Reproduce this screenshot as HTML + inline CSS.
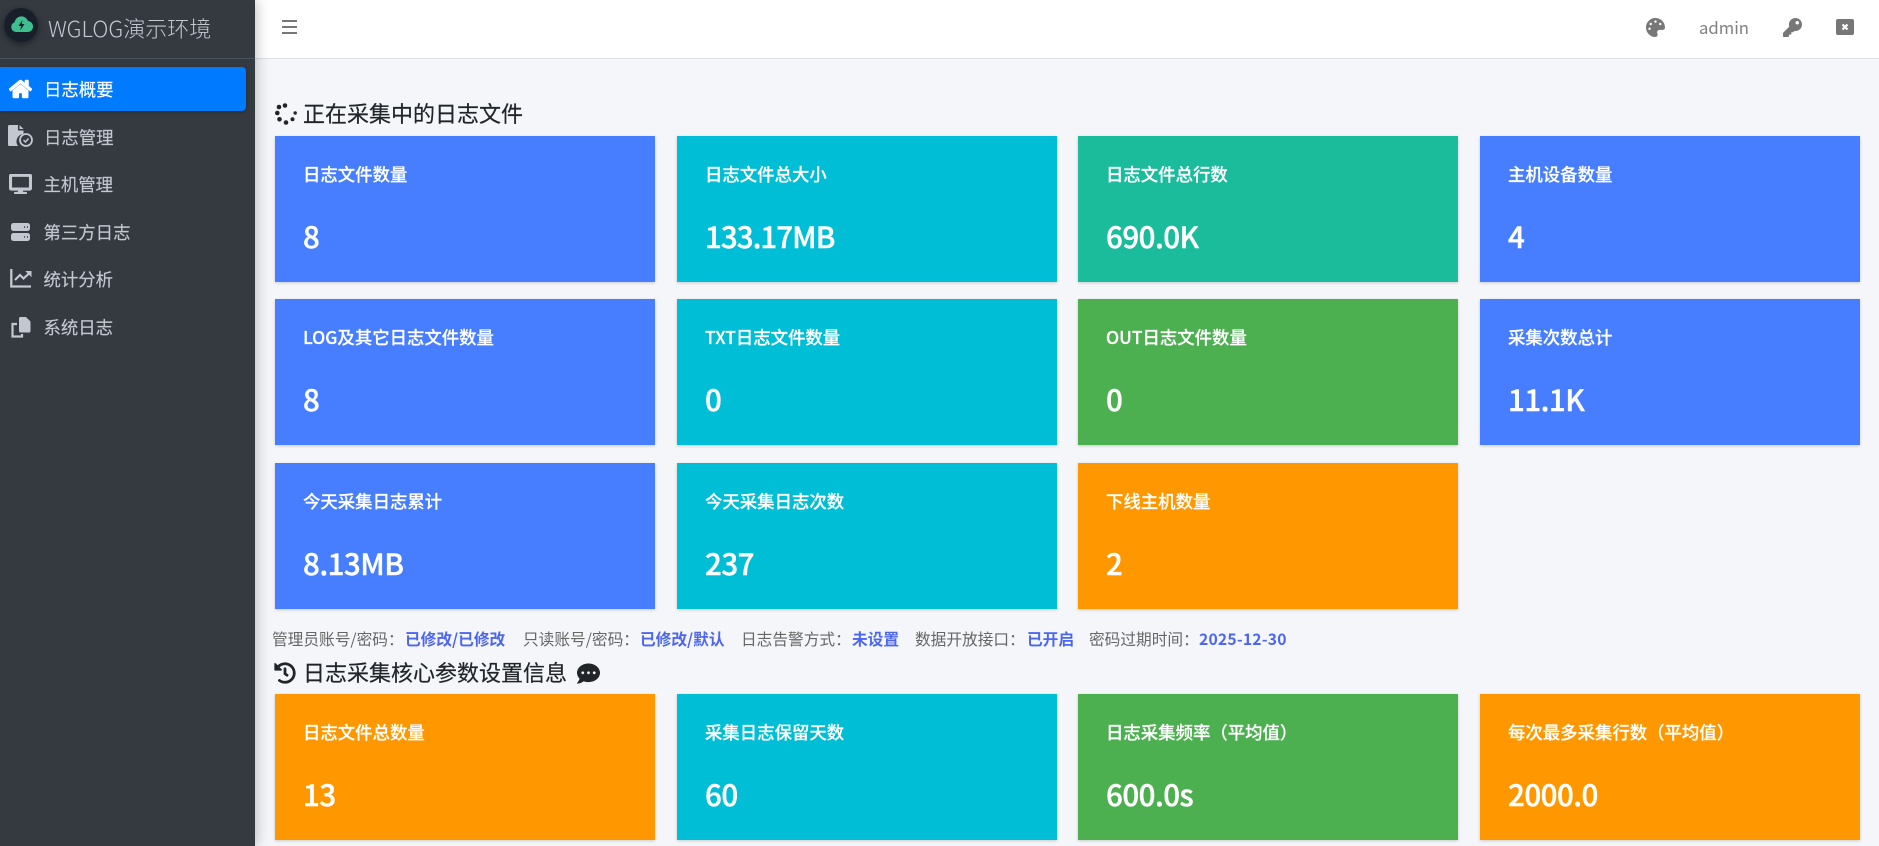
<!DOCTYPE html>
<html lang="zh"><head><meta charset="utf-8"><title>WGLOG</title>
<style>
*{box-sizing:border-box}
html,body{margin:0;padding:0;width:1879px;height:846px;overflow:hidden;background:#f4f6f9;font-family:"Noto Sans CJK SC","Liberation Sans",sans-serif;color:#212529}
.abs,.card,.n,.t{position:absolute}
.side{position:absolute;left:0;top:0;width:255px;height:846px;background:#343a40;box-shadow:0 0 14px rgba(0,0,0,.3);z-index:3}
.top{position:absolute;left:255px;top:0;width:1624px;height:59px;background:#fff;border-bottom:1px solid #dee2e6}
.brand{position:absolute;left:48px;top:12px;font-size:22px;line-height:32px;color:#c2c7d0;font-weight:300;white-space:nowrap}
.sep{position:absolute;left:0;top:58px;width:255px;height:1px;background:#4b545c}
.pill{position:absolute;left:0;top:67px;width:246px;height:44px;background:#007bff;border-radius:0 4px 4px 0;box-shadow:0 1px 3px rgba(0,0,0,.3)}
.n{font-size:17.4px;line-height:24px;color:#c2c7d0;white-space:nowrap;left:43.5px;-webkit-text-stroke:.15px currentColor}
.card{width:380px;height:146px;box-shadow:0 1px 3px rgba(0,0,0,.18);color:#fff}
.card .a{position:absolute;left:28px;top:26px;font-size:17.4px;line-height:26px;font-weight:500;white-space:nowrap;-webkit-text-stroke:.2px #fff}
.card .b{position:absolute;left:28px;top:78px;font-size:29.5px;line-height:44px;font-weight:500;white-space:nowrap;letter-spacing:-.5px;-webkit-text-stroke:.4px #fff}
.bl{background:#467eff}.cy{background:#00bed6}.te{background:#1abc9c}.gr{background:#4caf50}.or{background:#ff9800}
.h{position:absolute;font-size:22px;line-height:30px;color:#212529;white-space:nowrap;font-weight:400;-webkit-text-stroke:.2px #212529}
.t{font-size:15.7px;line-height:22px;top:628px;color:#666;white-space:nowrap}
.t.s{color:#4c66f0;font-weight:700}
svg{position:absolute;display:block}
</style></head><body>
<div class="top">
<div class="abs" style="left:27px;top:20px;width:15px;height:2px;background:#777;box-shadow:0 6px 0 #777,0 12px 0 #777"></div>
</div>
<svg style="left:1646px;top:18px" width="19" height="19" viewBox="0 0 512 512" fill="#777"><path d="M204.3 5C104.9 24.4 24.8 104.3 5.2 203.4c-37 187 131.7 326.4 258.8 306.7 41.2-6.4 61.4-54.6 42.5-91.7-23.1-45.4 9.9-98.4 60.9-98.4h79.7c35.8 0 64.8-29.6 64.9-65.3C511.5 97.1 368.1-26.9 204.3 5zM96 320c-17.7 0-32-14.3-32-32s14.3-32 32-32 32 14.3 32 32-14.3 32-32 32zm32-128c-17.7 0-32-14.3-32-32s14.3-32 32-32 32 14.3 32 32-14.3 32-32 32zm128-64c-17.7 0-32-14.3-32-32s14.3-32 32-32 32 14.3 32 32-14.3 32-32 32zm128 64c-17.7 0-32-14.3-32-32s14.3-32 32-32 32 14.3 32 32-14.3 32-32 32z"/></svg>
<div class="abs" style="left:1699px;top:15px;font-size:16.7px;line-height:24px;color:#808080;font-weight:400">admin</div>
<svg style="left:1783px;top:18px" width="19" height="19" viewBox="0 0 512 512" fill="#777"><path d="M512 176.001C512 273.203 433.202 352 336 352c-11.22 0-22.19-1.062-32.827-3.069l-24.012 27.014A23.999 23.999 0 0 1 261.223 384H224v40c0 13.255-10.745 24-24 24h-40v40c0 13.255-10.745 24-24 24H24c-13.255 0-24-10.745-24-24v-78.059c0-6.365 2.529-12.47 7.029-16.971l161.802-161.802C163.108 213.814 160 195.271 160 176 160 78.798 238.797.001 335.999 0 433.488-.001 512 78.511 512 176.001zM336 128c0 26.51 21.49 48 48 48s48-21.49 48-48-21.49-48-48-48-48 21.49-48 48z"/></svg>
<svg style="left:1836px;top:19px" width="18" height="16" viewBox="0 0 18 16"><rect width="18" height="16" rx="2" fill="#777"/><path d="M6.500 5.500l5 5M11.500 5.500l-5 5" stroke="#fff" stroke-width="2.200"/></svg>

<div class="side">
<div class="abs" style="left:4px;top:8px;width:34px;height:34px;border-radius:50%;box-shadow:0 2px 7px rgba(0,0,0,.45)"></div>
<svg style="left:4px;top:8px" width="34" height="34" viewBox="0 0 34 34"><circle cx="17" cy="17" r="17" fill="#181f2a"/><path d="M12 24a5 5 0 0 1-1.500-9.700A7 7 0 0 1 24 13a5.500 5.500 0 0 1-1 11z" fill="#3dbf90"/><path d="M18.500 12l-4 6h2.600l-.8 4.500 4.200-6.500h-2.700z" fill="#181f2a"/></svg>
<div class="brand">WGLOG演示环境</div>
<div class="sep"></div>
<div class="pill"></div>
<svg style="left:9px;top:79px" width="23" height="20" viewBox="0 0 576 512" fill="#fff" stroke="#fff" stroke-width="24"><path d="M280.37 148.26L96 300.11V464a16 16 0 0 0 16 16l112.06-.29a16 16 0 0 0 15.92-16V368a16 16 0 0 1 16-16h64a16 16 0 0 1 16 16v95.64a16 16 0 0 0 16 16.05L464 480a16 16 0 0 0 16-16V300L295.67 148.26a12.19 12.19 0 0 0-15.3 0zM571.6 251.47L488 182.56V44.05a12 12 0 0 0-12-12h-56a12 12 0 0 0-12 12v72.61L318.47 43a48 48 0 0 0-61 0L4.34 251.47a12 12 0 0 0-1.6 16.9l25.5 31A12 12 0 0 0 45.15 301l235.22-193.74a12.19 12.19 0 0 1 15.3 0L530.9 301a12 12 0 0 0 16.9-1.6l25.5-31a12 12 0 0 0-1.7-16.93z"/></svg>
<div class="n" style="top:78px;color:#fff;left:44px">日志概要</div>
<svg style="left:8px;top:125px" width="25" height="22" viewBox="0 0 25 22"><path d="M1.500 0H10v5.500h5.500V9A7.500 7.500 0 0 0 10 21H1.500A1.500 1.500 0 0 1 0 19.500V1.500A1.500 1.500 0 0 1 1.500 0zM11.500 0l4 4h-4z" fill="#c2c7d0"/><circle cx="18" cy="15" r="6" fill="none" stroke="#c2c7d0" stroke-width="1.800"/><path d="M15.500 15l2 2 3-3.500" fill="none" stroke="#c2c7d0" stroke-width="1.500"/></svg>
<div class="n" style="top:126px;left:44px">日志管理</div>
<svg style="left:9px;top:174px" width="23" height="20" viewBox="0 0 576 512" fill="#c2c7d0" stroke="#c2c7d0" stroke-width="16"><path d="M528 0H48C21.500 0 0 21.500 0 48v320c0 26.500 21.500 48 48 48h192l-16 48h-72c-13.300 0-24 10.700-24 24s10.700 24 24 24h272c13.300 0 24-10.700 24-24s-10.700-24-24-24h-72l-16-48h192c26.500 0 48-21.500 48-48V48c0-26.500-21.500-48-48-48zm-16 352H64V64h448v288z"/></svg>
<div class="n" style="top:173px">主机管理</div>
<svg style="left:11px;top:223px" width="19" height="18" viewBox="0 0 19 18"><rect width="19" height="8" rx="2.500" fill="#c2c7d0"/><rect y="10" width="19" height="8" rx="2.500" fill="#c2c7d0"/><path d="M13 4h1M16 4h1M13 14h1M16 14h1" stroke="#343a40" stroke-width="1.500"/></svg>
<div class="n" style="top:221px">第三方日志</div>
<svg style="left:10px;top:268px" width="22" height="20" viewBox="0 0 22 20" fill="none" stroke="#c2c7d0"><path d="M1.300 1v17.500H21" stroke-width="2.300"/><path d="M5 12l5-5 3.500 3.500L19.500 5" stroke-width="2.200"/><path d="M16.500 3.500h4.500V8z" fill="#c2c7d0" stroke-width="1"/></svg>
<div class="n" style="top:268px">统计分析</div>
<svg style="left:11px;top:317px" width="20" height="21" viewBox="0 0 20 21"><path d="M8 1.500A1.500 1.500 0 0 1 9.500 0H15l4.500 4.500V14a1.500 1.500 0 0 1-1.500 1.500H9.500A1.500 1.500 0 0 1 8 14z" fill="#c2c7d0"/><path d="M6 7H1.500v12.500H11V17" fill="none" stroke="#c2c7d0" stroke-width="2.200"/></svg>
<div class="n" style="top:316px">系统日志</div>
</div>

<svg style="left:275px;top:103px" width="22" height="22" viewBox="0 0 22 22" fill="#212529"><circle cx="10" cy="2.500" r="2.300"/><circle cx="20.200" cy="10" r="1.700"/><circle cx="17.500" cy="16.300" r="2"/><circle cx="11" cy="19.500" r="2.300"/><circle cx="4.500" cy="16.300" r="2.300"/><circle cx="2.300" cy="10" r="2.300"/><circle cx="4" cy="4" r="2.300"/></svg>
<div class="h" style="left:303px;top:98px">正在采集中的日志文件</div>

<div class="card bl" style="left:275px;top:136px"><div class="a">日志文件数量</div><div class="b">8</div></div>
<div class="card cy" style="left:677px;top:136px"><div class="a">日志文件总大小</div><div class="b" style="letter-spacing:-.95px">133.17MB</div></div>
<div class="card te" style="left:1078px;top:136px"><div class="a">日志文件总行数</div><div class="b">690.0K</div></div>
<div class="card bl" style="left:1480px;top:136px"><div class="a">主机设备数量</div><div class="b">4</div></div>

<div class="card bl" style="left:275px;top:299px"><div class="a">LOG及其它日志文件数量</div><div class="b">8</div></div>
<div class="card cy" style="left:677px;top:299px"><div class="a">TXT日志文件数量</div><div class="b">0</div></div>
<div class="card gr" style="left:1078px;top:299px"><div class="a">OUT日志文件数量</div><div class="b">0</div></div>
<div class="card bl" style="left:1480px;top:299px"><div class="a">采集次数总计</div><div class="b">11.1K</div></div>

<div class="card bl" style="left:275px;top:463px"><div class="a">今天采集日志累计</div><div class="b">8.13MB</div></div>
<div class="card cy" style="left:677px;top:463px"><div class="a">今天采集日志次数</div><div class="b">237</div></div>
<div class="card or" style="left:1078px;top:463px"><div class="a">下线主机数量</div><div class="b">2</div></div>

<div class="t" style="left:272px">管理员账号/密码：</div><div class="t s" style="left:405px">已修改/已修改</div>
<div class="t" style="left:523px">只读账号/密码：</div><div class="t s" style="left:640px">已修改/默认</div>
<div class="t" style="left:741px">日志告警方式：</div><div class="t s" style="left:852px">未设置</div>
<div class="t" style="left:915px">数据开放接口：</div><div class="t s" style="left:1027px">已开启</div>
<div class="t" style="left:1089px">密码过期时间：</div><div class="t s" style="left:1199px;letter-spacing:.2px">2025-12-30</div>

<svg style="left:274px;top:662px" width="22" height="22" viewBox="0 0 512 512" fill="#212529"><path d="M504 255.531c.253 136.640-111.180 248.372-247.820 248.468-59.015.042-113.223-20.530-155.822-54.911-11.077-8.940-11.905-25.541-1.839-35.607l11.267-11.267c8.609-8.609 22.353-9.551 31.891-1.984C173.062 425.135 212.781 440 256 440c101.705 0 184-82.311 184-184 0-101.705-82.311-184-184-184-48.814 0-93.149 18.969-126.068 49.932l50.754 50.754c10.080 10.080 2.941 27.314-11.313 27.314H24c-8.837 0-16-7.163-16-16V38.627c0-14.254 17.234-21.393 27.314-11.314l49.372 49.372C129.209 34.136 189.552 8 256 8c136.810 0 247.747 110.780 248 247.531zm-180.912 78.784l9.823-12.630c8.138-10.463 6.253-25.542-4.210-33.679L288 256.349V152c0-13.255-10.745-24-24-24h-16c-13.255 0-24 10.745-24 24v135.651l65.409 50.874c10.463 8.137 25.541 6.253 33.679-4.210z"/></svg>
<div class="h" style="left:303px;top:657px">日志采集核心参数设置信息</div>
<svg style="left:577px;top:662px" width="23" height="23" viewBox="0 0 512 512" fill="#212529"><path d="M256 32C114.600 32 0 125.100 0 240c0 49.600 21.400 95 57 130.700C44.500 421.100 2.700 466 2.200 466.500c-2.200 2.300-2.800 5.700-1.500 8.700S4.800 480 8 480c66.300 0 116-31.800 140.600-51.400 32.700 12.300 69 19.400 107.400 19.400 141.400 0 256-93.100 256-208S397.400 32 256 32zM128 272c-17.700 0-32-14.300-32-32s14.300-32 32-32 32 14.300 32 32-14.300 32-32 32zm128 0c-17.700 0-32-14.300-32-32s14.300-32 32-32 32 14.300 32 32-14.300 32-32 32zm128 0c-17.700 0-32-14.300-32-32s14.300-32 32-32 32 14.300 32 32-14.300 32-32 32z"/></svg>

<div class="card or" style="left:275px;top:694px"><div class="a">日志文件总数量</div><div class="b">13</div></div>
<div class="card cy" style="left:677px;top:694px"><div class="a">采集日志保留天数</div><div class="b">60</div></div>
<div class="card gr" style="left:1078px;top:694px"><div class="a">日志采集频率（平均值）</div><div class="b">600.0s</div></div>
<div class="card or" style="left:1480px;top:694px"><div class="a">每次最多采集行数（平均值）</div><div class="b">2000.0</div></div>
</body></html>
